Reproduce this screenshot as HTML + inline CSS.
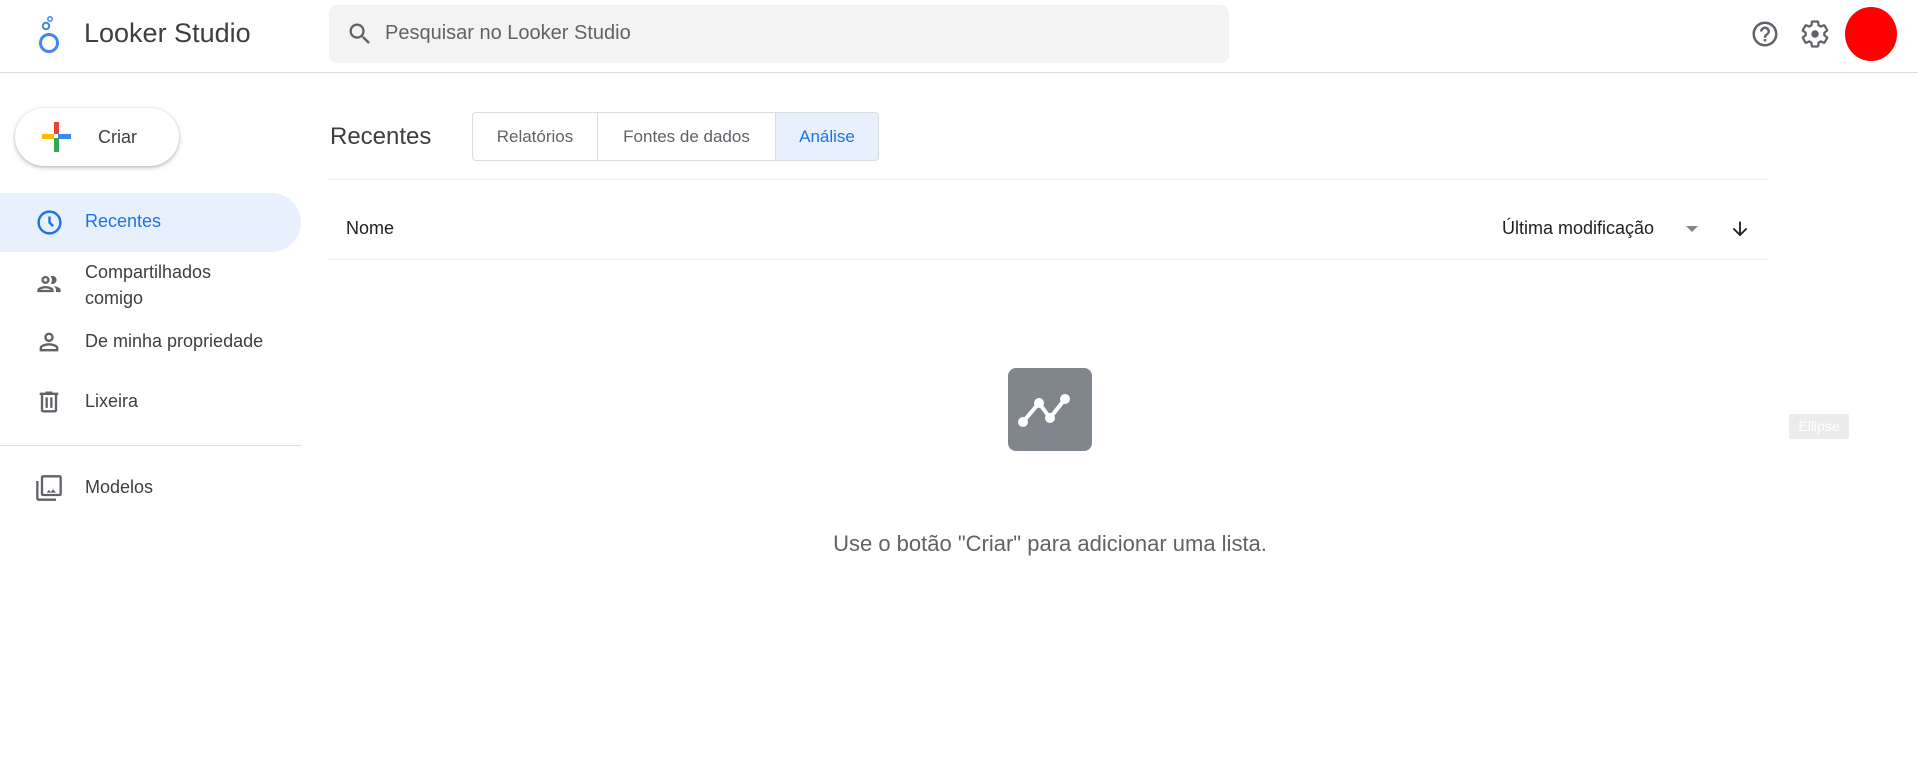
<!DOCTYPE html>
<html><head><meta charset="utf-8"><style>
*{margin:0;padding:0;box-sizing:border-box}
body{width:1918px;height:776px;background:#fff;font-family:"Liberation Sans",Arial,sans-serif;position:relative;overflow:hidden;color:#3c4043}
.a{position:absolute}
.t{white-space:nowrap}
</style></head><body>
<div class="a" style="left:0;top:72px;width:1918px;height:1px;background:#dadce0"></div>
<svg class="a" style="left:35px;top:14px" width="28" height="40" viewBox="0 0 28 40"><circle cx="14" cy="29" r="8.5" fill="none" stroke="#4285f4" stroke-width="3"/><circle cx="11" cy="12" r="3.2" fill="none" stroke="#4285f4" stroke-width="2"/><circle cx="15" cy="5" r="2.2" fill="none" stroke="#4285f4" stroke-width="1.5"/></svg>
<div class="a t" style="left:84px;top:18px;font-size:27px;color:#3c4043">Looker Studio</div>
<div class="a" style="left:329px;top:5px;width:900px;height:58px;background:#f3f3f3;border-radius:8px"></div>
<svg class="a" style="left:346px;top:20px" width="28" height="28" viewBox="0 0 24 24"><path fill="#5f6368" d="M15.5 14h-.79l-.28-.27A6.47 6.47 0 0 0 16 9.5 6.5 6.5 0 1 0 9.5 16c1.61 0 3.09-.59 4.23-1.57l.27.28v.79l5 4.99L20.49 19l-4.99-5zm-6 0C7.01 14 5 11.99 5 9.5S7.01 5 9.5 5 14 7.01 14 9.5 11.99 14 9.5 14z"/></svg>
<div class="a t" style="left:385px;top:22px;font-size:20px;color:#5f6368">Pesquisar no Looker Studio</div>
<svg class="a" style="left:1750px;top:19px" width="30" height="30" viewBox="0 0 24 24"><path fill="#5f6368" d="M11 18h2v-2h-2v2zm1-16C6.48 2 2 6.48 2 12s4.48 10 10 10 10-4.48 10-10S17.52 2 12 2zm0 18c-4.41 0-8-3.59-8-8s3.59-8 8-8 8 3.59 8 8-3.59 8-8 8zm0-14c-2.21 0-4 1.79-4 4h2c0-1.1.9-2 2-2s2 .9 2 2c0 2-3 1.75-3 5h2c0-2.25 3-2.5 3-5 0-2.21-1.79-4-4-4z"/></svg>
<svg class="a" style="left:1800px;top:19px" width="30" height="30" viewBox="0 0 24 24"><path fill="none" stroke="#5f6368" stroke-width="1.8" stroke-linejoin="round" d="M19.43 12.98c.04-.32.07-.64.07-.98s-.03-.66-.07-.98l2.11-1.65c.19-.15.24-.42.12-.64l-2-3.46a.5.5 0 0 0-.61-.22l-2.49 1c-.52-.4-1.08-.73-1.69-.98l-.38-2.65A.49.49 0 0 0 14 2h-4c-.25 0-.46.18-.49.42l-.38 2.650c-.61.25-1.170.59-1.69.98l-2.49-1a.5.5 0 0 0-.61.22l-2 3.46c-.13.22-.07.49.12.64l2.11 1.65c-.04.32-.07.65-.07.98s.03.66.07.98l-2.11 1.65c-.19.15-.24.42-.12.64l2 3.46c.12.22.39.3.61.22l2.49-1c.52.4 1.08.73 1.69.98l.38 2.65c.03.24.24.42.49.42h4c.25 0 .46-.18.49-.42l.38-2.65c.61-.25 1.17-.59 1.69-.98l2.49 1c.23.09.49 0 .61-.22l2-3.46c.12-.22.07-.49-.12-.64z"/><circle cx="12" cy="12" r="3" fill="#5f6368"/></svg>
<div class="a" style="left:1845px;top:7px;width:52px;height:54px;border-radius:50%;background:#f00"></div>

<div class="a" style="left:15px;top:108px;width:164px;height:58px;border-radius:29px;background:#fff;box-shadow:0 1px 3px rgba(60,64,67,.3),0 2px 6px rgba(60,64,67,.15)"></div>
<div class="a" style="left:42px;top:134px;width:12px;height:5px;background:#fbbc04"></div>
<div class="a" style="left:58px;top:134px;width:13px;height:5px;background:#4285f4"></div>
<div class="a" style="left:54px;top:122px;width:5px;height:12px;background:#ea4335"></div>
<div class="a" style="left:54px;top:138px;width:5px;height:14px;background:#34a853"></div>
<div class="a t" style="left:98px;top:127px;font-size:18px;color:#3c4043">Criar</div>

<div class="a" style="left:0;top:193px;width:301px;height:59px;background:#e8f0fe;border-radius:0 30px 30px 0"></div>
<svg class="a" style="left:35px;top:208px" width="29" height="29" viewBox="0 0 24 24"><circle cx="12" cy="12" r="9" fill="none" stroke="#1a73e8" stroke-width="2"/><path d="M12 7v5l3 3" fill="none" stroke="#1a73e8" stroke-width="2"/></svg>
<div class="a t" style="left:85px;top:211px;font-size:18px;color:#1a73e8">Recentes</div>
<svg class="a" style="left:35px;top:270px" width="28" height="28" viewBox="0 0 24 24"><path fill="#5f6368" d="M9 13.75c-2.34 0-7 1.17-7 3.5V19h14v-1.75c0-2.33-4.66-3.5-7-3.5zM4.34 17c.84-.58 2.87-1.25 4.66-1.25s3.82.67 4.66 1.25H4.34zM9 12c1.93 0 3.5-1.57 3.5-3.5S10.93 5 9 5 5.5 6.57 5.5 8.5 7.07 12 9 12zm0-5c.83 0 1.5.67 1.5 1.5S9.830 10 9 10s-1.5-.67-1.5-1.5S8.17 7 9 7zm7.04 6.81c1.16.84 1.96 1.96 1.96 3.44V19h4v-1.75c0-2.02-3.5-3.17-5.96-3.44zM15 12c1.93 0 3.5-1.57 3.5-3.5S16.93 5 15 5c-.54 0-1.04.13-1.5.35.63.89 1 1.98 1 3.15s-.37 2.26-1 3.15c.46.22.96.35 1.5.35z"/></svg>
<div class="a t" style="left:85px;top:259px;font-size:18px;line-height:26px;color:#3c4043">Compartilhados<br>comigo</div>
<svg class="a" style="left:35px;top:328px" width="28" height="28" viewBox="0 0 24 24"><path fill="#5f6368" d="M12 6c1.1 0 2 .9 2 2s-.9 2-2 2-2-.9-2-2 .9-2 2-2m0 9c2.7 0 5.8 1.29 6 2v1H6v-.99c.2-.72 3.3-2.01 6-2.01m0-11C9.79 4 8 5.79 8 8s1.79 4 4 4 4-1.79 4-4-1.79-4-4-4zm0 9c-2.67 0-8 1.34-8 4v3h16v-3c0-2.66-5.33-4-8-4z"/></svg>
<div class="a t" style="left:85px;top:331px;font-size:18px;color:#3c4043">De minha propriedade</div>
<svg class="a" style="left:35px;top:388px" width="28" height="28" viewBox="0 0 24 24"><path fill="#5f6368" d="M15 4V3H9v1H4v2h1v13c0 1.1.9 2 2 2h10c1.1 0 2-.9 2-2V6h1V4h-5zm2 15H7V6h10v13zM9 8h2v9H9zm4 0h2v9h-2z"/></svg>
<div class="a t" style="left:85px;top:391px;font-size:18px;color:#3c4043">Lixeira</div>
<div class="a" style="left:0;top:445px;width:301px;height:1px;background:#dadce0"></div>
<svg class="a" style="left:35px;top:474px" width="28" height="28" viewBox="0 0 24 24"><path fill="#5f6368" d="M3 6H1v15c0 1.1.9 2 2 2h15v-2H3V6zm18-5H7c-1.1 0-2 .9-2 2v14c0 1.1.9 2 2 2h14c1.1 0 2-.9 2-2V3c0-1.1-.9-2-2-2zm0 16H7V3h14v14zm-5.5-4-2 2.5-1.5-2L10 16h8l-2.5-3z"/></svg>
<div class="a t" style="left:85px;top:477px;font-size:18px;color:#3c4043">Modelos</div>

<div class="a t" style="left:330px;top:123px;font-size:24px;color:#3c4043">Recentes</div>
<div class="a" style="left:472px;top:112px;width:407px;height:49px;border:1px solid #dadce0;border-radius:4px;overflow:hidden;display:flex;font-size:17px">
<div style="width:125px;border-right:1px solid #dadce0;display:flex;align-items:center;justify-content:center;color:#5f6368">Relatórios</div>
<div style="width:178px;border-right:1px solid #dadce0;display:flex;align-items:center;justify-content:center;color:#5f6368">Fontes de dados</div>
<div style="flex:1;background:#e8f0fe;display:flex;align-items:center;justify-content:center;color:#1a73e8">Análise</div>
</div>
<div class="a" style="left:328px;top:179px;width:1441px;height:1px;background:#e8eaed"></div>
<div class="a t" style="left:346px;top:218px;font-size:18px;color:#202124">Nome</div>
<div class="a t" style="left:1502px;top:218px;font-size:18px;color:#202124">Última modificação</div>
<div class="a" style="left:1686px;top:226px;border-left:6px solid transparent;border-right:6px solid transparent;border-top:6px solid #80868b"></div>
<svg class="a" style="left:1729px;top:218px" width="22" height="22" viewBox="0 0 24 24"><path fill="#202124" d="M20 12l-1.41-1.41L13 16.17V4h-2v12.17l-5.58-5.59L4 12l8 8 8-8z"/></svg>
<div class="a" style="left:328px;top:259px;width:1441px;height:1px;background:#e8eaed"></div>

<div class="a" style="left:1008px;top:368px;width:84px;height:83px;border-radius:8px;background:#80868b"></div>
<svg class="a" style="left:1008px;top:368px" width="84" height="83" viewBox="0 0 84 83"><polyline points="15,54 31,35 42,50 57,31" fill="none" stroke="#fff" stroke-width="4" stroke-linejoin="round"/><circle cx="15" cy="54" r="5" fill="#fff"/><circle cx="31" cy="35" r="5" fill="#fff"/><circle cx="42" cy="50" r="5" fill="#fff"/><circle cx="57" cy="31" r="5" fill="#fff"/></svg>
<div class="a t" style="left:700px;top:531px;width:700px;text-align:center;font-size:22px;color:#5f6368">Use o botão "Criar" para adicionar uma lista.</div>
<div class="a t" style="left:1789px;top:414px;width:60px;height:25px;background:#ebebeb;border-radius:2px;color:#fff;font-size:14px;text-align:center;line-height:25px">Ellipse</div>
</body></html>
